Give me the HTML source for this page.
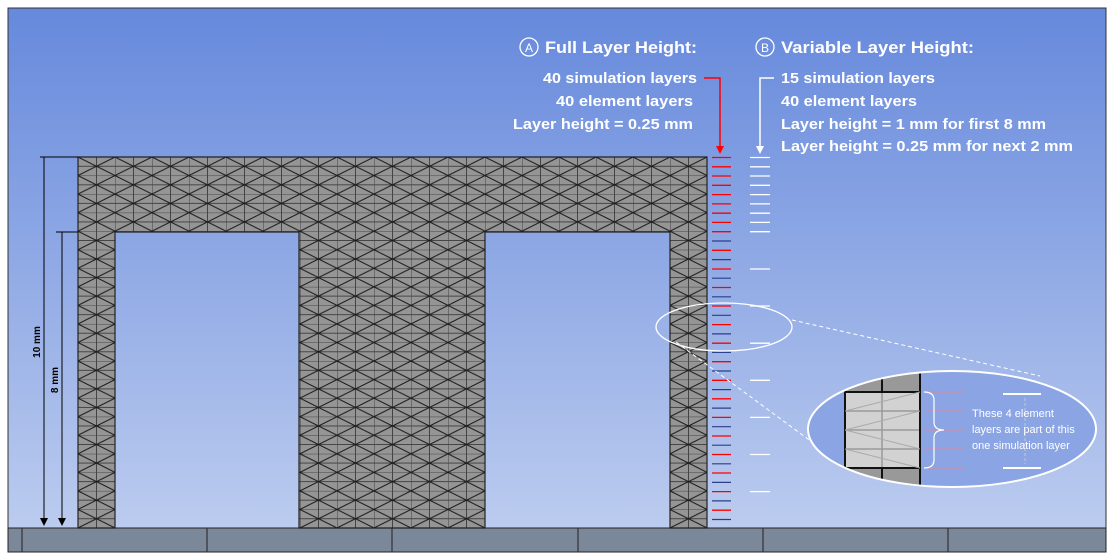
<!DOCTYPE html>
<html><head><meta charset="utf-8"><style>
html,body{margin:0;padding:0;background:#fff}
svg{display:block}
text{font-family:"Liberation Sans",sans-serif;}
</style></head><body>
<svg width="1114" height="559" viewBox="0 0 1114 559" xmlns="http://www.w3.org/2000/svg">
<defs>
<linearGradient id="bg" x1="0" y1="0" x2="0" y2="1">
<stop offset="0" stop-color="#6689dc"/><stop offset="1" stop-color="#c0cff0"/>
</linearGradient>
<pattern id="mesh" x="78" y="157" width="37" height="18.55" patternUnits="userSpaceOnUse">
<rect width="37" height="18.55" fill="#959595"/>
<path d="M0 0H37M0 9.275H37M0 0V18.55M18.5 0V18.55" stroke="#444" stroke-width="1" fill="none"/>
<path d="M0 0L18.5 9.275L0 18.55M37 0L18.5 9.275L37 18.55" stroke="#1a1a1a" stroke-width="1" fill="none"/>
</pattern>
</defs>
<rect x="8" y="8" width="1098" height="544" fill="url(#bg)" stroke="#333" stroke-width="1"/>
<rect x="8" y="528" width="1098" height="24" fill="#7a889a" stroke="#222" stroke-width="1"/>
<path d="M22 528V552M207 528V552M392 528V552M578 528V552M763 528V552M948 528V552" stroke="#333" stroke-width="1.2"/>
<path d="M78 157H707V528H670V232H485V528H299V232H115V528H78Z" fill="url(#mesh)" stroke="#222" stroke-width="1.2"/>
<path d="M40 157H78M56 232H78" stroke="#000" stroke-width="1"/>
<path d="M44 157V520M62 232V520" stroke="#000" stroke-width="1"/>
<path d="M40 518L44 526L48 518ZM58 518L62 526L66 518Z" fill="#000"/>
<text transform="translate(40 342) rotate(-90)" font-size="10" font-weight="bold" text-anchor="middle">10 mm</text>
<text transform="translate(58 380) rotate(-90)" font-size="10" font-weight="bold" text-anchor="middle">8 mm</text>
<g stroke="#f00" stroke-width="1.3">
<path d="M712 157.5h19M712 166.8h19M712 176h19M712 185.3h19M712 194.6h19M712 203.9h19M712 213.2h19M712 222.4h19M712 231.7h19"/>
<path d="M712 250.3h19M712 269h19M712 287.5h19M712 306h19M712 324.6h19M712 343.2h19M712 361.7h19M712 380.3h19M712 398.8h19M712 417.4h19M712 436h19M712 454.5h19M712 473h19M712 491.6h19M712 510.2h19"/>
</g>
<g stroke="#2a3f8a" stroke-width="1.2">
<path d="M712 241h19M712 259.6h19M712 278.2h19M712 296.8h19M712 315.3h19M712 333.9h19M712 352.4h19M712 371h19M712 389.6h19M712 408.1h19M712 426.7h19M712 445.2h19M712 463.8h19M712 482.4h19M712 500.9h19M712 519.5h19"/>
</g>
<g stroke="#fff" stroke-width="1.3">
<path d="M750 157.5h20M750 166.8h20M750 176h20M750 185.3h20M750 194.6h20M750 203.9h20M750 213.2h20M750 222.4h20M750 231.7h20M750 269h20M750 306h20M750 343.2h20M750 380.3h20M750 417.4h20M750 454.5h20M750 491.6h20"/>
</g>
<path d="M704 78H720V150" stroke="#f00" stroke-width="1.5" fill="none"/>
<path d="M716 146L720 154L724 146Z" fill="#f00"/>
<path d="M774 78H760V150" stroke="#fff" stroke-width="1.5" fill="none"/>
<path d="M756 146L760 154L764 146Z" fill="#fff"/>
<g fill="#fff" font-weight="bold">
<circle cx="529" cy="47" r="9" fill="none" stroke="#fff" stroke-width="1.3"/>
<text x="529" y="52" font-size="12" text-anchor="middle" font-weight="normal">A</text>
<text x="545" y="53" font-size="17" textLength="152" lengthAdjust="spacingAndGlyphs">Full Layer Height:</text>
<circle cx="765" cy="47" r="9" fill="none" stroke="#fff" stroke-width="1.3"/>
<text x="765" y="52" font-size="12" text-anchor="middle" font-weight="normal">B</text>
<text x="781" y="53" font-size="17" textLength="193" lengthAdjust="spacingAndGlyphs">Variable Layer Height:</text>
<text x="697" y="83" font-size="15" text-anchor="end" textLength="154" lengthAdjust="spacingAndGlyphs">40 simulation layers</text>
<text x="693" y="106" font-size="15" text-anchor="end" textLength="137" lengthAdjust="spacingAndGlyphs">40 element layers</text>
<text x="693" y="129" font-size="15" text-anchor="end" textLength="180" lengthAdjust="spacingAndGlyphs">Layer height = 0.25 mm</text>
<text x="781" y="83" font-size="15" textLength="154" lengthAdjust="spacingAndGlyphs">15 simulation layers</text>
<text x="781" y="106" font-size="15" textLength="136" lengthAdjust="spacingAndGlyphs">40 element layers</text>
<text x="781" y="129" font-size="15" textLength="265" lengthAdjust="spacingAndGlyphs">Layer height = 1 mm for first 8 mm</text>
<text x="781" y="151" font-size="15" textLength="292" lengthAdjust="spacingAndGlyphs">Layer height = 0.25 mm for next 2 mm</text>
</g>
<ellipse cx="724" cy="327" rx="68" ry="24" fill="none" stroke="#fff" stroke-width="1.3"/>
<path d="M792 320L1040 376M676 342L812 442" stroke="#fff" stroke-width="1" stroke-dasharray="4 3" fill="none"/>
<clipPath id="ec"><ellipse cx="952" cy="429" rx="144" ry="58"/></clipPath>
<g clip-path="url(#ec)">
<rect x="800" y="370" width="310" height="120" fill="#8aa4e4"/>
<rect x="845" y="370" width="75" height="120" fill="#999"/>
<rect x="845" y="392" width="75" height="76" fill="#d2d2d2"/>
<path d="M845 392H920M845 411H920M845 430H920M845 449H920M845 468H920M882 370V490M845 370V490M920 370V490" stroke="#999" stroke-width="1.5"/>
<path d="M845 392H920M845 468H920M845 370V490M920 370V490M882 370V392M882 468V490" stroke="#111" stroke-width="2"/>
<path d="M845 411L920 392M845 430L920 411M845 430L920 449M845 449L920 468" stroke="#aaa" stroke-width="1"/>
<path d="M926 392h38M926 411h38M926 430h38M926 449h38M926 468h38" stroke="#d88a9e" stroke-width="1"/>
<path d="M924 392q10 0 10 8v22q0 8 10 8q-10 0-10 8v22q0 8-10 8" stroke="#fff" stroke-width="1.2" fill="none"/>
<path d="M1003 394h38M1003 468h38" stroke="#fff" stroke-width="2"/>
<path d="M1025 398V464" stroke="#bcd" stroke-width="1" stroke-dasharray="3 2"/>
<g fill="#fff" font-size="11"><text x="972" y="417">These 4 element</text><text x="972" y="433">layers are part of this</text><text x="972" y="449">one simulation layer</text></g>
</g>
<ellipse cx="952" cy="429" rx="144" ry="58" fill="none" stroke="#fff" stroke-width="2"/>
</svg>
</body></html>
